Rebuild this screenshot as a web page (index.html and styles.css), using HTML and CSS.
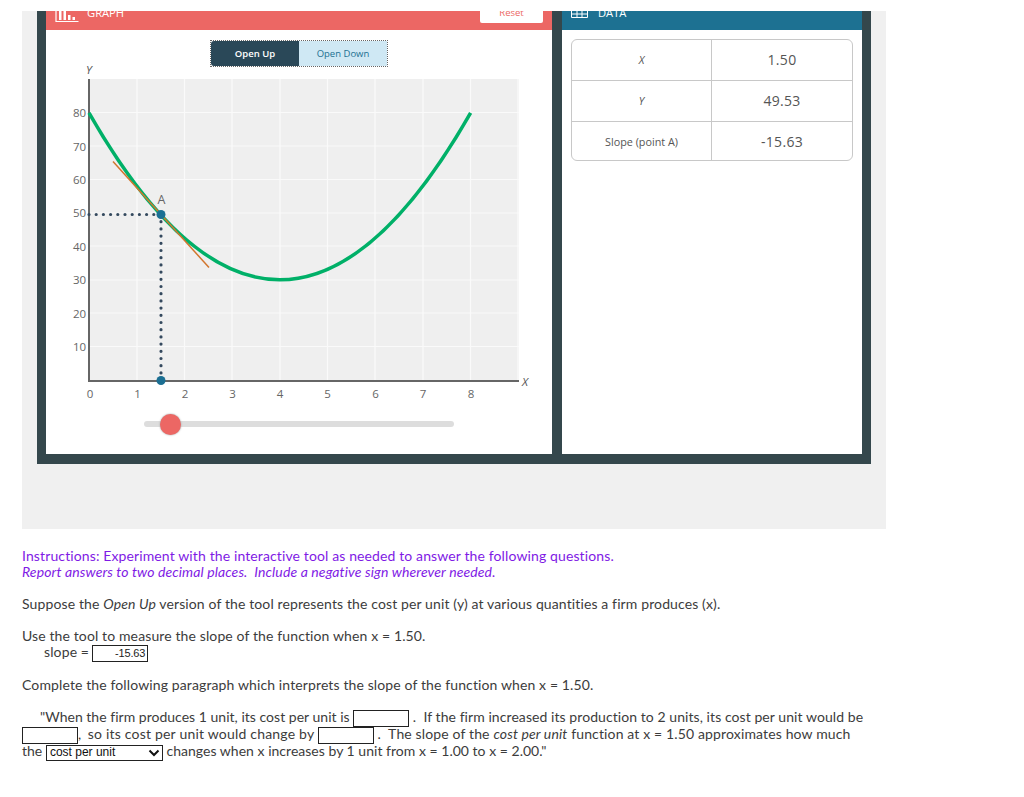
FILE: index.html
```html
<!DOCTYPE html>
<html lang="en">
<head>
<meta charset="utf-8">
<title>Interactive graph</title>
<link rel="stylesheet" href="styles.css">
</head>
<body>
<div class="tool-wrap">
  <div class="tool">
    <section class="pane pane-graph">
      <header class="bar bar-red">
        <svg class="bar-icon-graph" width="24" height="14" viewBox="0 0 24 14"><path d="M1 0V12.500H23.500" fill="none" stroke="#fff" stroke-width="1.200"/><path d="M4 1h2.500v10H4zM8.500 1H11v10H8.500zM13 6h2.500v5H13zM17.500 8H20v3h-2.500z" fill="#fff"/></svg>
        <span class="bar-title">GRAPH</span>
        <span class="reset">Reset</span>
      </header>
      <div class="toggle">
        <span class="toggle-on">Open Up</span>
        <span class="toggle-off">Open Down</span>
      </div>
      <svg class="chart" width="506" height="424" viewBox="46 30 506 424">
        <rect x="89" y="79" width="430" height="302" fill="#efefef"/>
        <g stroke="#fafafa" stroke-width="1.200">
          <path d="M137 79V381M184.500 79V381M232 79V381M280 79V381M327.500 79V381M375 79V381M423 79V381M470.500 79V381M518 79V381"/>
          <path d="M89 112.500H519M89 146H519M89 179.500H519M89 213H519M89 246H519M89 280H519M89 313H519M89 346.500H519"/>
        </g>
        <path d="M89 79V381H519" fill="none" stroke="#666" stroke-width="2"/>
        <path d="M89 112.800Q279.800 446.800 470.600 112.800" fill="none" stroke="#00b068" stroke-width="3.600"/>
        <path d="M113 161.500L209 267.500" fill="none" stroke="#d2762e" stroke-width="1.500"/>
        <path d="M89 214.500H161V380" fill="none" stroke="#34495e" stroke-width="3.200" stroke-linecap="round" stroke-dasharray="0 7.200"/>
        <circle cx="161" cy="214.500" r="4.500" fill="#1b6f93"/>
        <circle cx="161" cy="380.500" r="4.500" fill="#1b6f93"/>
        <g class="tick">
          <text x="79.500" y="116.500" text-anchor="middle">80</text>
          <text x="79.500" y="150.500" text-anchor="middle">70</text>
          <text x="79.500" y="183.500" text-anchor="middle">60</text>
          <text x="79.500" y="217" text-anchor="middle">50</text>
          <text x="79.500" y="250.500" text-anchor="middle">40</text>
          <text x="79.500" y="284" text-anchor="middle">30</text>
          <text x="79.500" y="317.500" text-anchor="middle">20</text>
          <text x="79.500" y="350.500" text-anchor="middle">10</text>
          <text x="90" y="397.500" text-anchor="middle">0</text>
          <text x="137.500" y="397.500" text-anchor="middle">1</text>
          <text x="185" y="397.500" text-anchor="middle">2</text>
          <text x="232.500" y="397.500" text-anchor="middle">3</text>
          <text x="280" y="397.500" text-anchor="middle">4</text>
          <text x="327.500" y="397.500" text-anchor="middle">5</text>
          <text x="375.500" y="397.500" text-anchor="middle">6</text>
          <text x="423" y="397.500" text-anchor="middle">7</text>
          <text x="471" y="397.500" text-anchor="middle">8</text>
          <text x="161.500" y="203.500" text-anchor="middle" class="tick-a">A</text>
        </g>
        <text x="89" y="74" text-anchor="middle" class="axis-name">Y</text>
        <text x="525" y="386" text-anchor="middle" class="axis-name">X</text>
      </svg>
      <div class="slider"><span class="thumb"></span></div>
    </section>
    <section class="pane pane-data">
      <header class="bar bar-teal">
        <svg class="bar-icon-data" width="17" height="12" viewBox="0 0 17 12"><path d="M.5.500h16v11H.5zM.5 4.500h16M.5 8h16M6 .5v11M11 .5v11" fill="none" stroke="#fff" stroke-width="1"/></svg>
        <span class="bar-title">DATA</span>
      </header>
      <div class="table-wrap">
        <table class="data-table">
          <tr><th><i>X</i></th><td>1.50</td></tr>
          <tr><th><i>Y</i></th><td>49.53</td></tr>
          <tr><th>Slope (point A)</th><td class="td-last">-15.63</td></tr>
        </table>
      </div>
    </section>
  </div>
</div>
<div class="questions">
  <p class="instr">Instructions: Experiment with the interactive tool as needed to answer the following questions.<br><i>Report answers to two decimal places.&nbsp; Include a negative sign wherever needed.</i></p>
  <p>Suppose the <i>Open Up</i> version of the tool represents the cost per unit (y) at various quantities a firm produces (x).</p>
  <p class="use">Use the tool to measure the slope of the function when x = 1.50.<br><span class="indent">slope =</span><span class="box box-filled">-15.63</span></p>
  <p>Complete the following paragraph which interprets the slope of the function when x = 1.50.</p>
  <p class="last"><span class="indent-q">"When the firm produces 1 unit, its cost per unit is</span> <span class="box"></span>&nbsp;. &nbsp;<span class="tail">If the firm increased its production to 2 units, its cost per unit would be</span><br><span class="box"></span>, <span class="so">so its cost per unit would change by</span> <span class="box"></span>&nbsp;. &nbsp;<span class="tail-wide">The slope of the <i>cost per unit</i> function at x = 1.50 approximates how much</span><br>the <span class="select">cost per unit<svg width="12" height="8" viewBox="0 0 12 8"><path d="M1.500 1.500L6 6l4.500-4.500" fill="none" stroke="#111" stroke-width="2"/></svg></span> changes when x increases by 1 unit from x = 1.00 to x = 2.00."</p>
</div>
</body>
</html>
```
FILE: styles.css
```css
* { box-sizing: border-box; }
html, body { margin: 0; padding: 0; background: #fff; }
body { font-family: "Lato", "Liberation Sans", sans-serif; font-size: 14px; color: #3c3c3c; height: 797px; overflow: hidden; }
.tool-wrap { margin: 11px 0 0 22px; width: 864px; height: 518px; background: #f0f0f0; padding: 0 15px; }
.tool { display: flex; gap: 10px; background: #34474c; height: 453px; padding: 0 9px 10px; }
.pane { background: #fff; height: 443px; overflow: hidden; position: relative; }
.pane-graph { width: 506px; }
.pane-data { width: 300px; }
.bar { height: 19px; display: flex; align-items: flex-start; color: #fff; font-family: "Open Sans", sans-serif; font-size: 11.200px; overflow: hidden; }
.bar-red { background: #ec6764; padding-left: 9px; }
.bar-teal { background: #1d7192; padding-left: 9px; }
.bar-title { line-height: 14px; margin-top: -5px; }
.bar-icon-graph { margin: -2px 8px 0 0; }
.bar-icon-data { margin: -5px 10px 0 0; }
.reset { margin-left: auto; margin-right: 9px; background: #fff; color: #ec6764; width: 63px; height: 12px; text-align: center; font-size: 9.500px; line-height: 3px; border-radius: 0 0 2px 2px; }
.toggle { display: flex; width: 178px; height: 27px; margin: 10px 0 0 164px; border: 1px dotted #666; font-family: "Open Sans", sans-serif; font-size: 9.500px; font-weight: 600; }
.toggle span { display: flex; flex: 0 0 auto; align-items: center; justify-content: center; }
.toggle-on { width: 88px; background: #2a4858; color: #fff; border-radius: 3px 0 0 3px; }
.toggle-off { width: 88px; background: #cfe8f4; color: #1d7192; font-weight: 400; }
.chart { position: absolute; left: 0; top: 19px; display: block; }
.tick { font-family: "Open Sans", sans-serif; font-size: 11.500px; fill: #666; }
.tick-a { font-size: 12.500px; }
.axis-name { font-family: "Open Sans", sans-serif; font-size: 11.500px; font-style: italic; fill: #555; }
.slider { position: absolute; left: 98px; top: 410px; width: 310px; height: 6px; background: #dddddd; border-radius: 3px; }
.thumb { position: absolute; left: 16px; top: -7px; width: 21px; height: 21px; border-radius: 50%; background: #ec6764; box-shadow: 0 0 2px #999; }
.table-wrap { padding: 9px 9px 0; }
.data-table { width: 282px; border-collapse: separate; border-spacing: 0; border: 1px solid #c8c8c8; border-radius: 6px; font-family: "Open Sans", sans-serif; color: #555; }
.data-table th, .data-table td { height: 41px; padding: 0 0 1px; text-align: center; vertical-align: middle; border-bottom: 1px solid #c8c8c8; }
.data-table tr:last-child th, .data-table tr:last-child td { border-bottom: 0; height: 38px; padding: 0; }
.data-table th { width: 140px; border-right: 1px solid #c8c8c8; font-size: 10.800px; font-weight: 400; }
.data-table td { font-size: 14px; letter-spacing: .3px; padding-bottom: 2px; }
.questions { margin: 19px 0 0 22px; width: 860px; line-height: 16px; font-size: 14px; letter-spacing: .12px; }
.questions p { margin: 0 0 16px; white-space: nowrap; }
.questions .use { margin-bottom: 17px; }
.instr { color: #7f1ae5; }
.indent { margin-left: 22px; margin-right: 3px; }
.indent-q { margin-left: 18px; }
.box { display: inline-block; width: 56px; height: 17px; margin: -2px 0; border: 1px solid #222; vertical-align: -3px; background: #fff; font-family: "Liberation Sans", sans-serif; font-size: 11px; line-height: 15px; text-align: right; padding-right: 2px; color: #222; letter-spacing: -.2px; overflow: hidden; }
.select { display: inline-flex; align-items: center; justify-content: space-between; width: 117px; height: 16px; margin: -2px 0; border: 1px solid #222; vertical-align: 0; padding: 0 2px 0 3px; font-family: "Liberation Sans", sans-serif; font-size: 12px; color: #111; letter-spacing: 0; }
.questions .last { line-height: 17px; margin-top: -1px; letter-spacing: .02px; }
.so { margin-left: 3px; letter-spacing: .2px; }
.tail { letter-spacing: .07px; }
.tail-wide { letter-spacing: .14px; }
```
